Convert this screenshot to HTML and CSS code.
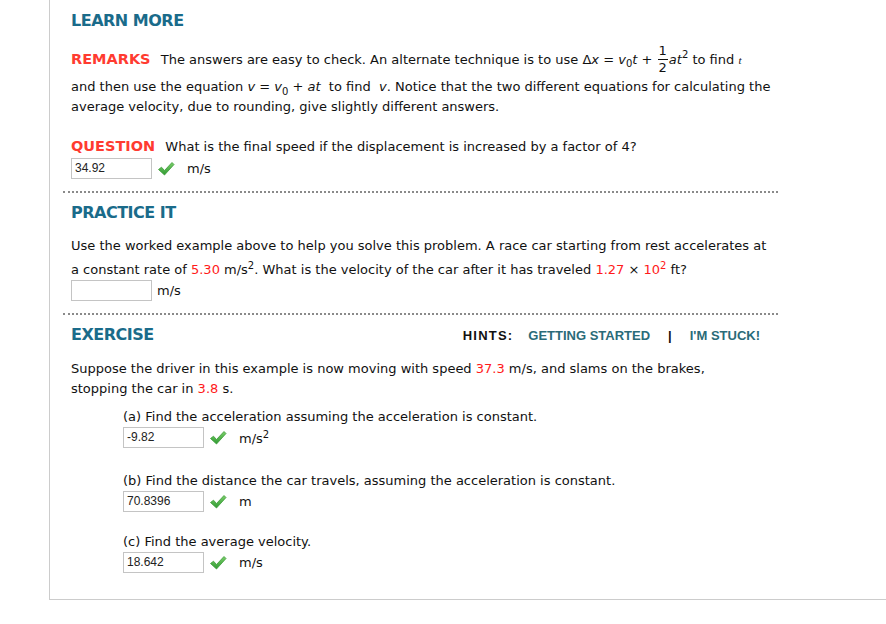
FILE: index.html
```html
<!DOCTYPE html>
<html>
<head>
<meta charset="utf-8">
<link rel="stylesheet" href="styles.css">
</head>
<body>
<div class="box">
  <div class="inner">
    <section class="sec learn">
      <h2 class="head">LEARN MORE</h2>
      <p class="para remarks"><span class="label">REMARKS</span> The answers are easy to check. An alternate technique is to use &Delta;<i>x</i> = <i>v</i><sub>0</sub><i>t</i> + <span class="frac"><span class="num">1</span><span class="den">2</span></span><i>at</i><sup>2</sup> to find <i class="tiny">t</i><br>and then use the equation <i>v</i> = <i>v</i><sub>0</sub> + <i>at</i>&nbsp; to find&nbsp; <i>v</i>. Notice that the two different equations for calculating the<br>average velocity, due to rounding, give slightly different answers.</p>
      <p class="para question"><span class="label">QUESTION</span> What is the final speed if the displacement is increased by a factor of 4?</p>
      <div class="answer qa">
        <span class="field">34.92</span>
        <svg class="check" viewBox="0 0 18 16" width="18" height="16"><defs><linearGradient id="g1" x1="0" y1="0" x2="0" y2="1"><stop offset="0" stop-color="#7ccf6a"/><stop offset="1" stop-color="#2f9a32"/></linearGradient></defs><path d="M1.5 8.5 L4.5 6.2 L7.5 9.5 L15 1.5 L17 3.5 L7.5 14 Z" fill="url(#g1)" stroke="#3a9a36" stroke-width="0.8" stroke-linejoin="round"/></svg>
        <span class="unit">m/s</span>
      </div>
    </section>
    <div class="sep"></div>
    <section class="sec practice">
      <h2 class="head">PRACTICE IT</h2>
      <p class="para p1">Use the worked example above to help you solve this problem. A race car starting from rest accelerates at<br>a constant rate of <span class="red">5.30</span> m/s<sup>2</sup>. What is the velocity of the car after it has traveled <span class="red">1.27</span> &times; <span class="red">10<sup>2</sup></span> ft?</p>
      <div class="answer">
        <span class="field"></span>
        <span class="unit nocheck">m/s</span>
      </div>
    </section>
    <div class="sep"></div>
    <section class="sec exercise">
      <div class="exhead">
        <h2 class="head">EXERCISE</h2>
        <div class="hints"><span class="hl">HINTS:</span><a class="hint">GETTING STARTED</a><span class="bar">|</span><a class="hint">I'M STUCK!</a></div>
      </div>
      <p class="para ex1">Suppose the driver in this example is now moving with speed <span class="red">37.3</span> m/s, and slams on the brakes,<br>stopping the car in <span class="red">3.8</span> s.</p>
      <div class="part pa">
        <p class="para q">(a) Find the acceleration assuming the acceleration is constant.</p>
        <div class="answer">
          <span class="field">-9.82</span>
          <svg class="check" viewBox="0 0 18 16" width="18" height="16"><path d="M1.5 8.5 L4.5 6.2 L7.5 9.5 L15 1.5 L17 3.5 L7.5 14 Z" fill="url(#g1)" stroke="#3a9a36" stroke-width="0.8" stroke-linejoin="round"/></svg>
          <span class="unit">m/s<sup>2</sup></span>
        </div>
      </div>
      <div class="part pb">
        <p class="para q">(b) Find the distance the car travels, assuming the acceleration is constant.</p>
        <div class="answer">
          <span class="field">70.8396</span>
          <svg class="check" viewBox="0 0 18 16" width="18" height="16"><path d="M1.5 8.5 L4.5 6.2 L7.5 9.5 L15 1.5 L17 3.5 L7.5 14 Z" fill="url(#g1)" stroke="#3a9a36" stroke-width="0.8" stroke-linejoin="round"/></svg>
          <span class="unit">m</span>
        </div>
      </div>
      <div class="part pc">
        <p class="para q">(c) Find the average velocity.</p>
        <div class="answer">
          <span class="field">18.642</span>
          <svg class="check" viewBox="0 0 18 16" width="18" height="16"><path d="M1.5 8.5 L4.5 6.2 L7.5 9.5 L15 1.5 L17 3.5 L7.5 14 Z" fill="url(#g1)" stroke="#3a9a36" stroke-width="0.8" stroke-linejoin="round"/></svg>
          <span class="unit">m/s</span>
        </div>
      </div>
    </section>
  </div>
</div>
</body>
</html>
```
FILE: styles.css
```css
html, body {
  margin: 0;
  padding: 0;
  background: #fff;
}
body {
  font-family: "DejaVu Sans", Verdana, sans-serif;
  font-size: 13px;
  color: #111;
  overflow: hidden;
}
.box {
  margin-left: 49px;
  border-left: 1px solid #cccccc;
  border-bottom: 1px solid #cccccc;
  padding-bottom: 26px;
}
.inner {
  margin-left: 13px;
  width: 715px;
}
.sec {
  padding-left: 8px;
}
.head {
  margin: 0;
  font-size: 16px;
  letter-spacing: -0.5px;
  line-height: 20px;
  font-weight: bold;
  color: #1a6b8a;
}
.learn .head {
  padding-top: 11px;
}
.para {
  margin: 0;
  line-height: 20px;
}
.label {
  color: #ff3b30;
  font-weight: bold;
  font-size: 14.5px;
  margin-right: 6px;
}
.red {
  color: #ff1a1a;
}
.remarks {
  margin-top: 12px;
}
.remarks sub, .remarks sup {
  line-height: 0;
}
.frac {
  display: inline-flex;
  flex-direction: column;
  align-items: center;
  vertical-align: middle;
  font-size: 13px;
  line-height: 16px;
  padding-bottom: 1px;
  margin: 0 1px;
}
.frac .num {
  border-bottom: 1px solid #111;
  padding: 0 1px;
}
.tiny {
  font-family: "Liberation Serif", serif;
  font-size: 11px;
}
sub, sup {
  font-size: 10px;
}
.question {
  margin-top: 19px;
}
.answer {
  display: flex;
  align-items: center;
  height: 21px;
}
.answer.qa {
  margin-top: 1px;
}
.field {
  box-sizing: border-box;
  width: 81px;
  height: 21px;
  border: 1px solid #c4c4c4;
  font-family: "Liberation Sans", Arial, sans-serif;
  font-size: 12px;
  line-height: 19px;
  padding-left: 3px;
  color: #222;
}
.check {
  margin-left: 5px;
}
.unit {
  margin-left: 12px;
}
.unit.nocheck {
  margin-left: 5px;
}
.sep {
  border-top: 2px dotted #8a8a8a;
  margin-top: 12px;
}
.practice .head {
  padding-top: 10px;
}
.p1 {
  margin-top: 13px;
}
.exercise {
  padding-top: 10px;
}
.exhead {
  display: flex;
  justify-content: space-between;
  align-items: center;
  padding-right: 18px;
}
.hints {
  font-family: "Liberation Sans", Arial, sans-serif;
  font-weight: bold;
  font-size: 13px;
  display: flex;
  align-items: center;
}
.hl {
  color: #111;
  letter-spacing: 1.2px;
}
.hint {
  color: #2a6b78;
}
.hints .hint:first-of-type {
  margin-left: 15px;
}
.bar {
  margin: 0 18px;
}
.ex1 {
  margin-top: 14px;
}
.part {
  padding-left: 52px;
}
.pa {
  margin-top: 8px;
}
.pb {
  margin-top: 23px;
}
.pc {
  margin-top: 20px;
}
```
